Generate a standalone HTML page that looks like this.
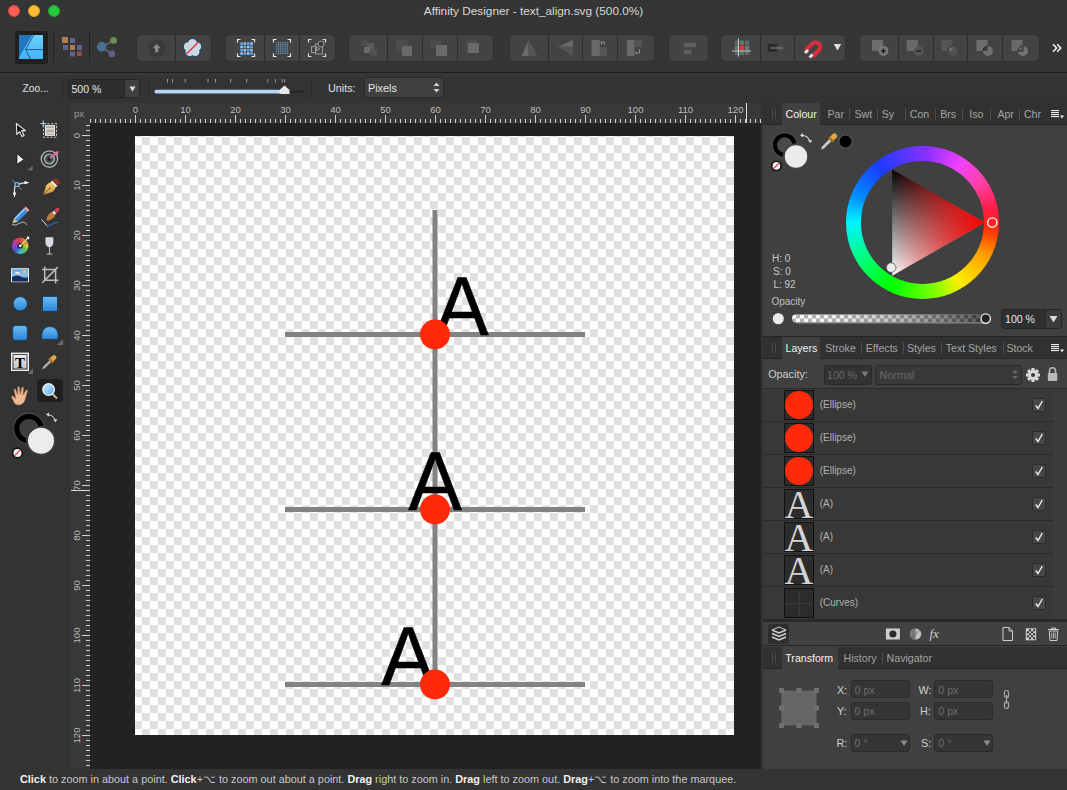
<!DOCTYPE html><html><head><meta charset="utf-8"><style>
*{margin:0;padding:0;box-sizing:border-box}
html,body{width:1067px;height:790px;overflow:hidden;background:#353535;font-family:"Liberation Sans", sans-serif;}
.abs{position:absolute}
.grp{position:absolute;top:35px;height:26px;background:#434343;border-radius:4px;box-shadow:0 0 0 0.5px #2a2a2a}
.div{position:absolute;top:0;width:1px;height:26px;background:#2c2c2c}
.tab{position:absolute;font-size:10.6px;color:#a8a8a8;white-space:nowrap}
.sep{position:absolute;width:1px;height:13px;background:#4a4a4a}
</style></head><body>
<div class="abs" style="left:8px;top:5px;width:12px;height:12px;border-radius:6px;background:#fe5f57;border:0.5px solid #e0443e"></div>
<div class="abs" style="left:28px;top:5px;width:12px;height:12px;border-radius:6px;background:#febc2e;border:0.5px solid #dea123"></div>
<div class="abs" style="left:48px;top:5px;width:12px;height:12px;border-radius:6px;background:#28c840;border:0.5px solid #1aab29"></div>
<div class="abs" style="left:0;top:3.5px;width:1067px;text-align:center;font-size:11.8px;color:#d8d8d8;">Affinity Designer - text_align.svg (500.0%)</div>
<div class="abs" style="left:0;top:73px;width:1067px;height:30px;background:linear-gradient(#383838,#333333 4px,#333333)"></div>
<div class="abs" style="left:0;top:72px;width:1067px;height:1px;background:#1c1c1c"></div>
<div class="abs" style="left:0px;top:103px;width:71px;height:666px;background:#333333"></div>
<div class="abs" style="left:0px;top:769px;width:1067px;height:21px;background:#333333"></div>
<div class="abs" style="left:71px;top:103px;width:690px;height:20px;background:#383838"></div>
<div class="abs" style="left:71px;top:123px;width:19px;height:646px;background:#383838"></div>
<div class="abs" style="left:90px;top:123px;width:671px;height:646px;background:#222222"></div>
<svg style="position:absolute;left:71px;top:103px" width="690" height="20"><rect x="19.0" y="16" width="1" height="4" fill="#cfcfcf"/><rect x="24.0" y="16" width="1" height="4" fill="#cfcfcf"/><rect x="29.0" y="16" width="1" height="4" fill="#cfcfcf"/><rect x="34.0" y="16" width="1" height="4" fill="#cfcfcf"/><rect x="39.0" y="16" width="1" height="4" fill="#cfcfcf"/><rect x="44.0" y="16" width="1" height="4" fill="#cfcfcf"/><rect x="49.0" y="16" width="1" height="4" fill="#cfcfcf"/><rect x="54.0" y="16" width="1" height="4" fill="#cfcfcf"/><rect x="59.0" y="16" width="1" height="4" fill="#cfcfcf"/><rect x="64.0" y="12" width="1" height="8" fill="#cfcfcf"/><text x="64.5" y="10" text-anchor="middle" font-size="9.5" fill="#bdbdbd" font-family="Liberation Sans">0</text><rect x="69.0" y="16" width="1" height="4" fill="#cfcfcf"/><rect x="74.0" y="16" width="1" height="4" fill="#cfcfcf"/><rect x="79.0" y="16" width="1" height="4" fill="#cfcfcf"/><rect x="84.0" y="16" width="1" height="4" fill="#cfcfcf"/><rect x="89.0" y="16" width="1" height="4" fill="#cfcfcf"/><rect x="94.0" y="16" width="1" height="4" fill="#cfcfcf"/><rect x="99.0" y="16" width="1" height="4" fill="#cfcfcf"/><rect x="104.0" y="16" width="1" height="4" fill="#cfcfcf"/><rect x="109.0" y="16" width="1" height="4" fill="#cfcfcf"/><rect x="114.0" y="12" width="1" height="8" fill="#cfcfcf"/><text x="114.5" y="10" text-anchor="middle" font-size="9.5" fill="#bdbdbd" font-family="Liberation Sans">10</text><rect x="119.0" y="16" width="1" height="4" fill="#cfcfcf"/><rect x="124.0" y="16" width="1" height="4" fill="#cfcfcf"/><rect x="129.0" y="16" width="1" height="4" fill="#cfcfcf"/><rect x="134.0" y="16" width="1" height="4" fill="#cfcfcf"/><rect x="139.0" y="16" width="1" height="4" fill="#cfcfcf"/><rect x="144.0" y="16" width="1" height="4" fill="#cfcfcf"/><rect x="149.0" y="16" width="1" height="4" fill="#cfcfcf"/><rect x="154.0" y="16" width="1" height="4" fill="#cfcfcf"/><rect x="159.0" y="16" width="1" height="4" fill="#cfcfcf"/><rect x="164.0" y="12" width="1" height="8" fill="#cfcfcf"/><text x="164.5" y="10" text-anchor="middle" font-size="9.5" fill="#bdbdbd" font-family="Liberation Sans">20</text><rect x="169.0" y="16" width="1" height="4" fill="#cfcfcf"/><rect x="174.0" y="16" width="1" height="4" fill="#cfcfcf"/><rect x="179.0" y="16" width="1" height="4" fill="#cfcfcf"/><rect x="184.0" y="16" width="1" height="4" fill="#cfcfcf"/><rect x="189.0" y="16" width="1" height="4" fill="#cfcfcf"/><rect x="194.0" y="16" width="1" height="4" fill="#cfcfcf"/><rect x="199.0" y="16" width="1" height="4" fill="#cfcfcf"/><rect x="204.0" y="16" width="1" height="4" fill="#cfcfcf"/><rect x="209.0" y="16" width="1" height="4" fill="#cfcfcf"/><rect x="214.0" y="12" width="1" height="8" fill="#cfcfcf"/><text x="214.5" y="10" text-anchor="middle" font-size="9.5" fill="#bdbdbd" font-family="Liberation Sans">30</text><rect x="219.0" y="16" width="1" height="4" fill="#cfcfcf"/><rect x="224.0" y="16" width="1" height="4" fill="#cfcfcf"/><rect x="229.0" y="16" width="1" height="4" fill="#cfcfcf"/><rect x="234.0" y="16" width="1" height="4" fill="#cfcfcf"/><rect x="239.0" y="16" width="1" height="4" fill="#cfcfcf"/><rect x="244.0" y="16" width="1" height="4" fill="#cfcfcf"/><rect x="249.0" y="16" width="1" height="4" fill="#cfcfcf"/><rect x="254.0" y="16" width="1" height="4" fill="#cfcfcf"/><rect x="259.0" y="16" width="1" height="4" fill="#cfcfcf"/><rect x="264.0" y="12" width="1" height="8" fill="#cfcfcf"/><text x="264.5" y="10" text-anchor="middle" font-size="9.5" fill="#bdbdbd" font-family="Liberation Sans">40</text><rect x="269.0" y="16" width="1" height="4" fill="#cfcfcf"/><rect x="274.0" y="16" width="1" height="4" fill="#cfcfcf"/><rect x="279.0" y="16" width="1" height="4" fill="#cfcfcf"/><rect x="284.0" y="16" width="1" height="4" fill="#cfcfcf"/><rect x="289.0" y="16" width="1" height="4" fill="#cfcfcf"/><rect x="294.0" y="16" width="1" height="4" fill="#cfcfcf"/><rect x="299.0" y="16" width="1" height="4" fill="#cfcfcf"/><rect x="304.0" y="16" width="1" height="4" fill="#cfcfcf"/><rect x="309.0" y="16" width="1" height="4" fill="#cfcfcf"/><rect x="314.0" y="12" width="1" height="8" fill="#cfcfcf"/><text x="314.5" y="10" text-anchor="middle" font-size="9.5" fill="#bdbdbd" font-family="Liberation Sans">50</text><rect x="319.0" y="16" width="1" height="4" fill="#cfcfcf"/><rect x="324.0" y="16" width="1" height="4" fill="#cfcfcf"/><rect x="329.0" y="16" width="1" height="4" fill="#cfcfcf"/><rect x="334.0" y="16" width="1" height="4" fill="#cfcfcf"/><rect x="339.0" y="16" width="1" height="4" fill="#cfcfcf"/><rect x="344.0" y="16" width="1" height="4" fill="#cfcfcf"/><rect x="349.0" y="16" width="1" height="4" fill="#cfcfcf"/><rect x="354.0" y="16" width="1" height="4" fill="#cfcfcf"/><rect x="359.0" y="16" width="1" height="4" fill="#cfcfcf"/><rect x="364.0" y="12" width="1" height="8" fill="#cfcfcf"/><text x="364.5" y="10" text-anchor="middle" font-size="9.5" fill="#bdbdbd" font-family="Liberation Sans">60</text><rect x="369.0" y="16" width="1" height="4" fill="#cfcfcf"/><rect x="374.0" y="16" width="1" height="4" fill="#cfcfcf"/><rect x="379.0" y="16" width="1" height="4" fill="#cfcfcf"/><rect x="384.0" y="16" width="1" height="4" fill="#cfcfcf"/><rect x="389.0" y="16" width="1" height="4" fill="#cfcfcf"/><rect x="394.0" y="16" width="1" height="4" fill="#cfcfcf"/><rect x="399.0" y="16" width="1" height="4" fill="#cfcfcf"/><rect x="404.0" y="16" width="1" height="4" fill="#cfcfcf"/><rect x="409.0" y="16" width="1" height="4" fill="#cfcfcf"/><rect x="414.0" y="12" width="1" height="8" fill="#cfcfcf"/><text x="414.5" y="10" text-anchor="middle" font-size="9.5" fill="#bdbdbd" font-family="Liberation Sans">70</text><rect x="419.0" y="16" width="1" height="4" fill="#cfcfcf"/><rect x="424.0" y="16" width="1" height="4" fill="#cfcfcf"/><rect x="429.0" y="16" width="1" height="4" fill="#cfcfcf"/><rect x="434.0" y="16" width="1" height="4" fill="#cfcfcf"/><rect x="439.0" y="16" width="1" height="4" fill="#cfcfcf"/><rect x="444.0" y="16" width="1" height="4" fill="#cfcfcf"/><rect x="449.0" y="16" width="1" height="4" fill="#cfcfcf"/><rect x="454.0" y="16" width="1" height="4" fill="#cfcfcf"/><rect x="459.0" y="16" width="1" height="4" fill="#cfcfcf"/><rect x="464.0" y="12" width="1" height="8" fill="#cfcfcf"/><text x="464.5" y="10" text-anchor="middle" font-size="9.5" fill="#bdbdbd" font-family="Liberation Sans">80</text><rect x="469.0" y="16" width="1" height="4" fill="#cfcfcf"/><rect x="474.0" y="16" width="1" height="4" fill="#cfcfcf"/><rect x="479.0" y="16" width="1" height="4" fill="#cfcfcf"/><rect x="484.0" y="16" width="1" height="4" fill="#cfcfcf"/><rect x="489.0" y="16" width="1" height="4" fill="#cfcfcf"/><rect x="494.0" y="16" width="1" height="4" fill="#cfcfcf"/><rect x="499.0" y="16" width="1" height="4" fill="#cfcfcf"/><rect x="504.0" y="16" width="1" height="4" fill="#cfcfcf"/><rect x="509.0" y="16" width="1" height="4" fill="#cfcfcf"/><rect x="514.0" y="12" width="1" height="8" fill="#cfcfcf"/><text x="514.5" y="10" text-anchor="middle" font-size="9.5" fill="#bdbdbd" font-family="Liberation Sans">90</text><rect x="519.0" y="16" width="1" height="4" fill="#cfcfcf"/><rect x="524.0" y="16" width="1" height="4" fill="#cfcfcf"/><rect x="529.0" y="16" width="1" height="4" fill="#cfcfcf"/><rect x="534.0" y="16" width="1" height="4" fill="#cfcfcf"/><rect x="539.0" y="16" width="1" height="4" fill="#cfcfcf"/><rect x="544.0" y="16" width="1" height="4" fill="#cfcfcf"/><rect x="549.0" y="16" width="1" height="4" fill="#cfcfcf"/><rect x="554.0" y="16" width="1" height="4" fill="#cfcfcf"/><rect x="559.0" y="16" width="1" height="4" fill="#cfcfcf"/><rect x="564.0" y="12" width="1" height="8" fill="#cfcfcf"/><text x="564.5" y="10" text-anchor="middle" font-size="9.5" fill="#bdbdbd" font-family="Liberation Sans">100</text><rect x="569.0" y="16" width="1" height="4" fill="#cfcfcf"/><rect x="574.0" y="16" width="1" height="4" fill="#cfcfcf"/><rect x="579.0" y="16" width="1" height="4" fill="#cfcfcf"/><rect x="584.0" y="16" width="1" height="4" fill="#cfcfcf"/><rect x="589.0" y="16" width="1" height="4" fill="#cfcfcf"/><rect x="594.0" y="16" width="1" height="4" fill="#cfcfcf"/><rect x="599.0" y="16" width="1" height="4" fill="#cfcfcf"/><rect x="604.0" y="16" width="1" height="4" fill="#cfcfcf"/><rect x="609.0" y="16" width="1" height="4" fill="#cfcfcf"/><rect x="614.0" y="12" width="1" height="8" fill="#cfcfcf"/><text x="614.5" y="10" text-anchor="middle" font-size="9.5" fill="#bdbdbd" font-family="Liberation Sans">110</text><rect x="619.0" y="16" width="1" height="4" fill="#cfcfcf"/><rect x="624.0" y="16" width="1" height="4" fill="#cfcfcf"/><rect x="629.0" y="16" width="1" height="4" fill="#cfcfcf"/><rect x="634.0" y="16" width="1" height="4" fill="#cfcfcf"/><rect x="639.0" y="16" width="1" height="4" fill="#cfcfcf"/><rect x="644.0" y="16" width="1" height="4" fill="#cfcfcf"/><rect x="649.0" y="16" width="1" height="4" fill="#cfcfcf"/><rect x="654.0" y="16" width="1" height="4" fill="#cfcfcf"/><rect x="659.0" y="16" width="1" height="4" fill="#cfcfcf"/><rect x="664.0" y="12" width="1" height="8" fill="#cfcfcf"/><text x="664.5" y="10" text-anchor="middle" font-size="9.5" fill="#bdbdbd" font-family="Liberation Sans">120</text><rect x="669.0" y="16" width="1" height="4" fill="#cfcfcf"/><rect x="674.0" y="16" width="1" height="4" fill="#cfcfcf"/><rect x="679.0" y="16" width="1" height="4" fill="#cfcfcf"/><rect x="684.0" y="16" width="1" height="4" fill="#cfcfcf"/><rect x="689.0" y="16" width="1" height="4" fill="#cfcfcf"/><rect x="675" y="0" width="1" height="20" fill="#dcdcdc"/></svg>
<svg style="position:absolute;left:71px;top:123px" width="19" height="646"><rect x="15" y="2.0" width="4" height="1" fill="#cfcfcf"/><rect x="15" y="7.0" width="4" height="1" fill="#cfcfcf"/><rect x="11" y="12.0" width="8" height="1" fill="#cfcfcf"/><text transform="translate(9.4,12.5) rotate(-90)" text-anchor="middle" font-size="9.5" fill="#bdbdbd" font-family="Liberation Sans">0</text><rect x="15" y="17.0" width="4" height="1" fill="#cfcfcf"/><rect x="15" y="22.0" width="4" height="1" fill="#cfcfcf"/><rect x="15" y="27.0" width="4" height="1" fill="#cfcfcf"/><rect x="15" y="32.0" width="4" height="1" fill="#cfcfcf"/><rect x="15" y="37.0" width="4" height="1" fill="#cfcfcf"/><rect x="15" y="42.0" width="4" height="1" fill="#cfcfcf"/><rect x="15" y="47.0" width="4" height="1" fill="#cfcfcf"/><rect x="15" y="52.0" width="4" height="1" fill="#cfcfcf"/><rect x="15" y="57.0" width="4" height="1" fill="#cfcfcf"/><rect x="11" y="62.0" width="8" height="1" fill="#cfcfcf"/><text transform="translate(9.4,62.5) rotate(-90)" text-anchor="middle" font-size="9.5" fill="#bdbdbd" font-family="Liberation Sans">10</text><rect x="15" y="67.0" width="4" height="1" fill="#cfcfcf"/><rect x="15" y="72.0" width="4" height="1" fill="#cfcfcf"/><rect x="15" y="77.0" width="4" height="1" fill="#cfcfcf"/><rect x="15" y="82.0" width="4" height="1" fill="#cfcfcf"/><rect x="15" y="87.0" width="4" height="1" fill="#cfcfcf"/><rect x="15" y="92.0" width="4" height="1" fill="#cfcfcf"/><rect x="15" y="97.0" width="4" height="1" fill="#cfcfcf"/><rect x="15" y="102.0" width="4" height="1" fill="#cfcfcf"/><rect x="15" y="107.0" width="4" height="1" fill="#cfcfcf"/><rect x="11" y="112.0" width="8" height="1" fill="#cfcfcf"/><text transform="translate(9.4,112.5) rotate(-90)" text-anchor="middle" font-size="9.5" fill="#bdbdbd" font-family="Liberation Sans">20</text><rect x="15" y="117.0" width="4" height="1" fill="#cfcfcf"/><rect x="15" y="122.0" width="4" height="1" fill="#cfcfcf"/><rect x="15" y="127.0" width="4" height="1" fill="#cfcfcf"/><rect x="15" y="132.0" width="4" height="1" fill="#cfcfcf"/><rect x="15" y="137.0" width="4" height="1" fill="#cfcfcf"/><rect x="15" y="142.0" width="4" height="1" fill="#cfcfcf"/><rect x="15" y="147.0" width="4" height="1" fill="#cfcfcf"/><rect x="15" y="152.0" width="4" height="1" fill="#cfcfcf"/><rect x="15" y="157.0" width="4" height="1" fill="#cfcfcf"/><rect x="11" y="162.0" width="8" height="1" fill="#cfcfcf"/><text transform="translate(9.4,162.5) rotate(-90)" text-anchor="middle" font-size="9.5" fill="#bdbdbd" font-family="Liberation Sans">30</text><rect x="15" y="167.0" width="4" height="1" fill="#cfcfcf"/><rect x="15" y="172.0" width="4" height="1" fill="#cfcfcf"/><rect x="15" y="177.0" width="4" height="1" fill="#cfcfcf"/><rect x="15" y="182.0" width="4" height="1" fill="#cfcfcf"/><rect x="15" y="187.0" width="4" height="1" fill="#cfcfcf"/><rect x="15" y="192.0" width="4" height="1" fill="#cfcfcf"/><rect x="15" y="197.0" width="4" height="1" fill="#cfcfcf"/><rect x="15" y="202.0" width="4" height="1" fill="#cfcfcf"/><rect x="15" y="207.0" width="4" height="1" fill="#cfcfcf"/><rect x="11" y="212.0" width="8" height="1" fill="#cfcfcf"/><text transform="translate(9.4,212.5) rotate(-90)" text-anchor="middle" font-size="9.5" fill="#bdbdbd" font-family="Liberation Sans">40</text><rect x="15" y="217.0" width="4" height="1" fill="#cfcfcf"/><rect x="15" y="222.0" width="4" height="1" fill="#cfcfcf"/><rect x="15" y="227.0" width="4" height="1" fill="#cfcfcf"/><rect x="15" y="232.0" width="4" height="1" fill="#cfcfcf"/><rect x="15" y="237.0" width="4" height="1" fill="#cfcfcf"/><rect x="15" y="242.0" width="4" height="1" fill="#cfcfcf"/><rect x="15" y="247.0" width="4" height="1" fill="#cfcfcf"/><rect x="15" y="252.0" width="4" height="1" fill="#cfcfcf"/><rect x="15" y="257.0" width="4" height="1" fill="#cfcfcf"/><rect x="11" y="262.0" width="8" height="1" fill="#cfcfcf"/><text transform="translate(9.4,262.5) rotate(-90)" text-anchor="middle" font-size="9.5" fill="#bdbdbd" font-family="Liberation Sans">50</text><rect x="15" y="267.0" width="4" height="1" fill="#cfcfcf"/><rect x="15" y="272.0" width="4" height="1" fill="#cfcfcf"/><rect x="15" y="277.0" width="4" height="1" fill="#cfcfcf"/><rect x="15" y="282.0" width="4" height="1" fill="#cfcfcf"/><rect x="15" y="287.0" width="4" height="1" fill="#cfcfcf"/><rect x="15" y="292.0" width="4" height="1" fill="#cfcfcf"/><rect x="15" y="297.0" width="4" height="1" fill="#cfcfcf"/><rect x="15" y="302.0" width="4" height="1" fill="#cfcfcf"/><rect x="15" y="307.0" width="4" height="1" fill="#cfcfcf"/><rect x="11" y="312.0" width="8" height="1" fill="#cfcfcf"/><text transform="translate(9.4,312.5) rotate(-90)" text-anchor="middle" font-size="9.5" fill="#bdbdbd" font-family="Liberation Sans">60</text><rect x="15" y="317.0" width="4" height="1" fill="#cfcfcf"/><rect x="15" y="322.0" width="4" height="1" fill="#cfcfcf"/><rect x="15" y="327.0" width="4" height="1" fill="#cfcfcf"/><rect x="15" y="332.0" width="4" height="1" fill="#cfcfcf"/><rect x="15" y="337.0" width="4" height="1" fill="#cfcfcf"/><rect x="15" y="342.0" width="4" height="1" fill="#cfcfcf"/><rect x="15" y="347.0" width="4" height="1" fill="#cfcfcf"/><rect x="15" y="352.0" width="4" height="1" fill="#cfcfcf"/><rect x="15" y="357.0" width="4" height="1" fill="#cfcfcf"/><rect x="11" y="362.0" width="8" height="1" fill="#cfcfcf"/><text transform="translate(9.4,362.5) rotate(-90)" text-anchor="middle" font-size="9.5" fill="#bdbdbd" font-family="Liberation Sans">70</text><rect x="15" y="367.0" width="4" height="1" fill="#cfcfcf"/><rect x="15" y="372.0" width="4" height="1" fill="#cfcfcf"/><rect x="15" y="377.0" width="4" height="1" fill="#cfcfcf"/><rect x="15" y="382.0" width="4" height="1" fill="#cfcfcf"/><rect x="15" y="387.0" width="4" height="1" fill="#cfcfcf"/><rect x="15" y="392.0" width="4" height="1" fill="#cfcfcf"/><rect x="15" y="397.0" width="4" height="1" fill="#cfcfcf"/><rect x="15" y="402.0" width="4" height="1" fill="#cfcfcf"/><rect x="15" y="407.0" width="4" height="1" fill="#cfcfcf"/><rect x="11" y="412.0" width="8" height="1" fill="#cfcfcf"/><text transform="translate(9.4,412.5) rotate(-90)" text-anchor="middle" font-size="9.5" fill="#bdbdbd" font-family="Liberation Sans">80</text><rect x="15" y="417.0" width="4" height="1" fill="#cfcfcf"/><rect x="15" y="422.0" width="4" height="1" fill="#cfcfcf"/><rect x="15" y="427.0" width="4" height="1" fill="#cfcfcf"/><rect x="15" y="432.0" width="4" height="1" fill="#cfcfcf"/><rect x="15" y="437.0" width="4" height="1" fill="#cfcfcf"/><rect x="15" y="442.0" width="4" height="1" fill="#cfcfcf"/><rect x="15" y="447.0" width="4" height="1" fill="#cfcfcf"/><rect x="15" y="452.0" width="4" height="1" fill="#cfcfcf"/><rect x="15" y="457.0" width="4" height="1" fill="#cfcfcf"/><rect x="11" y="462.0" width="8" height="1" fill="#cfcfcf"/><text transform="translate(9.4,462.5) rotate(-90)" text-anchor="middle" font-size="9.5" fill="#bdbdbd" font-family="Liberation Sans">90</text><rect x="15" y="467.0" width="4" height="1" fill="#cfcfcf"/><rect x="15" y="472.0" width="4" height="1" fill="#cfcfcf"/><rect x="15" y="477.0" width="4" height="1" fill="#cfcfcf"/><rect x="15" y="482.0" width="4" height="1" fill="#cfcfcf"/><rect x="15" y="487.0" width="4" height="1" fill="#cfcfcf"/><rect x="15" y="492.0" width="4" height="1" fill="#cfcfcf"/><rect x="15" y="497.0" width="4" height="1" fill="#cfcfcf"/><rect x="15" y="502.0" width="4" height="1" fill="#cfcfcf"/><rect x="15" y="507.0" width="4" height="1" fill="#cfcfcf"/><rect x="11" y="512.0" width="8" height="1" fill="#cfcfcf"/><text transform="translate(9.4,512.5) rotate(-90)" text-anchor="middle" font-size="9.5" fill="#bdbdbd" font-family="Liberation Sans">100</text><rect x="15" y="517.0" width="4" height="1" fill="#cfcfcf"/><rect x="15" y="522.0" width="4" height="1" fill="#cfcfcf"/><rect x="15" y="527.0" width="4" height="1" fill="#cfcfcf"/><rect x="15" y="532.0" width="4" height="1" fill="#cfcfcf"/><rect x="15" y="537.0" width="4" height="1" fill="#cfcfcf"/><rect x="15" y="542.0" width="4" height="1" fill="#cfcfcf"/><rect x="15" y="547.0" width="4" height="1" fill="#cfcfcf"/><rect x="15" y="552.0" width="4" height="1" fill="#cfcfcf"/><rect x="15" y="557.0" width="4" height="1" fill="#cfcfcf"/><rect x="11" y="562.0" width="8" height="1" fill="#cfcfcf"/><text transform="translate(9.4,562.5) rotate(-90)" text-anchor="middle" font-size="9.5" fill="#bdbdbd" font-family="Liberation Sans">110</text><rect x="15" y="567.0" width="4" height="1" fill="#cfcfcf"/><rect x="15" y="572.0" width="4" height="1" fill="#cfcfcf"/><rect x="15" y="577.0" width="4" height="1" fill="#cfcfcf"/><rect x="15" y="582.0" width="4" height="1" fill="#cfcfcf"/><rect x="15" y="587.0" width="4" height="1" fill="#cfcfcf"/><rect x="15" y="592.0" width="4" height="1" fill="#cfcfcf"/><rect x="15" y="597.0" width="4" height="1" fill="#cfcfcf"/><rect x="15" y="602.0" width="4" height="1" fill="#cfcfcf"/><rect x="15" y="607.0" width="4" height="1" fill="#cfcfcf"/><rect x="11" y="612.0" width="8" height="1" fill="#cfcfcf"/><text transform="translate(9.4,612.5) rotate(-90)" text-anchor="middle" font-size="9.5" fill="#bdbdbd" font-family="Liberation Sans">120</text><rect x="15" y="617.0" width="4" height="1" fill="#cfcfcf"/><rect x="15" y="622.0" width="4" height="1" fill="#cfcfcf"/><rect x="15" y="627.0" width="4" height="1" fill="#cfcfcf"/><rect x="15" y="632.0" width="4" height="1" fill="#cfcfcf"/><rect x="15" y="637.0" width="4" height="1" fill="#cfcfcf"/><rect x="15" y="642.0" width="4" height="1" fill="#cfcfcf"/><rect x="0" y="367" width="19" height="1" fill="#dcdcdc"/></svg>
<div class="abs" style="left:74px;top:108px;font-size:9.5px;color:#9a9a9a">px</div>
<div class="abs" style="left:135px;top:136px;width:599px;height:599px;background-color:#ffffff;background-image:linear-gradient(45deg,#e0e0e0 25%,transparent 25%,transparent 75%,#e0e0e0 75%),linear-gradient(45deg,#e0e0e0 25%,transparent 25%,transparent 75%,#e0e0e0 75%);background-size:16px 16px;background-position:-1px 1px,7px 9px"></div>
<svg class="abs" style="left:135px;top:136px" width="599" height="599">
<rect x="297.5" y="74" width="5" height="475" fill="#828282"/>
<rect x="150" y="196" width="300" height="5" fill="#828282"/>
<rect x="150" y="371" width="300" height="5" fill="#828282"/>
<rect x="150" y="546" width="300" height="5" fill="#828282"/>
<text transform="translate(300,199) scale(0.97,1.01) translate(-300,-199)" x="300" y="199" font-family="Liberation Sans" font-size="83" fill="#000" stroke="#000" stroke-width="0.5">A</text>
<text transform="translate(300,374) scale(0.97,1.01) translate(-300,-374)" x="300" y="374" font-family="Liberation Sans" font-size="83" fill="#000" stroke="#000" stroke-width="0.5" text-anchor="middle">A</text>
<text transform="translate(300,549) scale(0.97,1.01) translate(-300,-549)" x="300" y="549" font-family="Liberation Sans" font-size="83" fill="#000" stroke="#000" stroke-width="0.5" text-anchor="end">A</text>
<circle cx="300" cy="198.5" r="15" fill="#ff2a0a"/>
<circle cx="300" cy="373.5" r="15" fill="#ff2a0a"/>
<circle cx="300" cy="548.5" r="15" fill="#ff2a0a"/>
</svg>
<div class="abs" style="left:20px;top:773px;font-size:10.85px;color:#c8c8c8;white-space:nowrap"><b style="color:#f0f0f0">Click</b> to zoom in about a point. <b style="color:#f0f0f0">Click</b>+⌥ to zoom out about a point. <b style="color:#f0f0f0">Drag</b> right to zoom in. <b style="color:#f0f0f0">Drag</b> left to zoom out. <b style="color:#f0f0f0">Drag</b>+⌥ to zoom into the marquee.</div>
<svg class="abs" style="left:0;top:103px" width="71" height="370"><defs><linearGradient id="bl" x1="0" y1="0" x2="0" y2="1"><stop offset="0" stop-color="#6cbcf4"/><stop offset="1" stop-color="#2b86d6"/></linearGradient><linearGradient id="tg" x1="0" y1="0" x2="0" y2="1"><stop offset="0" stop-color="#f2f2f2"/><stop offset="1" stop-color="#bdbdbd"/></linearGradient><linearGradient id="sky" x1="0" y1="0" x2="0" y2="1"><stop offset="0" stop-color="#5aa8e8"/><stop offset="0.55" stop-color="#8cc4ec"/><stop offset="1" stop-color="#1a3870"/></linearGradient><linearGradient id="pen" x1="0" y1="0" x2="1" y2="1"><stop offset="0" stop-color="#f8d070"/><stop offset="1" stop-color="#c88a28"/></linearGradient><linearGradient id="mag" x1="0" y1="0" x2="1" y2="1"><stop offset="0" stop-color="#d0ecff"/><stop offset="1" stop-color="#5aa8e8"/></linearGradient></defs><path d="M16.3 20.5 L16.9 31.4 L19.7 28.7 L22.1 33.5 L24.1 32.4 L21.7 27.6 L25.5 27.6Z" fill="#111" stroke="#e8e8e8" stroke-width="1.1" stroke-linejoin="round"/><rect x="43.5" y="20.799999999999997" width="13" height="13.5" fill="none" stroke="#b8c8d8" stroke-width="1.1" stroke-dasharray="2.2 1.6"/><rect x="45.5" y="22.599999999999994" width="9" height="9.8" fill="#b8ae9c" stroke="#ececec" stroke-width="1"/><rect x="46" y="25.30000000000001" width="8" height="1" fill="#ececec"/><rect x="46" y="29.5" width="8" height="1" fill="#ececec"/><path d="M43.3 17.5 V23.5 M40.3 20.5 H46.3" stroke="#a8c8e8" stroke-width="1.2"/><path d="M16.9 50.5 L16.9 61.5 L24.1 56.5 Z" fill="#f4f4f4" stroke="#111" stroke-width="0.9" stroke-linejoin="round"/><path d="M32.7 62.19999999999999 V67.6 H27.5 Z" fill="#6a6a6a"/><circle cx="49.4" cy="56" r="8.2" fill="none" stroke="#b8b8b8" stroke-width="1.2"/><circle cx="49.4" cy="56" r="5" fill="#4a5a60" stroke="#b8b8b8" stroke-width="1.2"/><circle cx="49.4" cy="56" r="2.2" fill="#222"/><line x1="50" y1="55.400000000000006" x2="57" y2="49.5" stroke="#e070a0" stroke-width="1.8"/><path d="M54.5 49 L58.8 48 L57.8 52.19999999999999 Z" fill="#e070a0"/><path d="M14.5 94 V87 Q14.5 81.80000000000001 17.2 81.6 Q22 79.6 28.8 79.6" fill="none" stroke="#e0e0e0" stroke-width="1.2"/><line x1="12" y1="77" x2="22" y2="87" stroke="#8aa0b0" stroke-width="0.8"/><rect x="15.2" y="79.80000000000001" width="3.6" height="3.6" fill="#2a3a4a" stroke="#9cc8f0" stroke-width="1"/><circle cx="25.5" cy="79.6" r="1.5" fill="#f0f0f0"/><circle cx="14.5" cy="90.5" r="1.5" fill="#f0f0f0"/><g transform="translate(50.5,84.5) rotate(45) scale(0.88)"><path d="M0 11.5 L-5.2 1.5 Q-5.2 -3 -3.8 -4.5 H3.8 Q5.2 -3 5.2 1.5 Z" fill="url(#pen)"/><line x1="0" y1="11" x2="0" y2="1" stroke="#5a3a10" stroke-width="0.8"/><circle cx="0" cy="1.2" r="0.9" fill="#5a3a10"/><rect x="-4.2" y="-7" width="8.4" height="2.6" fill="#f0f0f0"/><path d="M-4 -7 V-10 Q-4 -12.5 0 -12.5 Q4 -12.5 4 -10 V-7Z" fill="#8a3422"/></g><g transform="translate(19.5,113.5) rotate(45)"><rect x="-2.6" y="-9" width="5.2" height="14" fill="#3a8ae0"/><rect x="-2.6" y="-9" width="1.8" height="14" fill="#8cc8f8"/><rect x="-2.6" y="-11.5" width="5.2" height="2.5" fill="#e8a0a0"/><path d="M-2.6 5 L0 10 L2.6 5Z" fill="#e0c090"/></g><path d="M12 121.5 Q16 123 19 120.5 Q22 118 25 119.5 L27 122" fill="none" stroke="#c8c8c8" stroke-width="0.9"/><g transform="translate(51,113) rotate(45)"><rect x="-1.8" y="-11" width="3.6" height="6" rx="1.5" fill="#d04050"/><rect x="-1.8" y="-5.5" width="3.6" height="2.2" fill="#e8e8e8"/><path d="M-2.8 -3.3 H2.8 Q3.5 3 0 6.5 Q-3.5 3 -2.8 -3.3Z" fill="#c07838"/></g><line x1="41.5" y1="116.4" x2="47.8" y2="123.5" stroke="#e0e0e0" stroke-width="1"/><path d="M47 123 Q52 122 54 120.5 Q56 119 59 119.5" fill="none" stroke="#3060a0" stroke-width="1.2"/><path d="M20.2 142.80 L20.20 134.60 A8.2 8.2 0 0 1 21.74 134.75Z" fill="#f04b3e"/><path d="M20.2 142.80 L21.62 134.72 A8.2 8.2 0 0 1 23.11 135.13Z" fill="#f0603a"/><path d="M20.2 142.80 L23.00 135.09 A8.2 8.2 0 0 1 24.40 135.76Z" fill="#f07636"/><path d="M20.2 142.80 L24.30 135.70 A8.2 8.2 0 0 1 25.56 136.59Z" fill="#f08b33"/><path d="M20.2 142.80 L25.47 136.52 A8.2 8.2 0 0 1 26.55 137.62Z" fill="#efa030"/><path d="M20.2 142.80 L26.48 137.53 A8.2 8.2 0 0 1 27.36 138.80Z" fill="#ecae33"/><path d="M20.2 142.80 L27.30 138.70 A8.2 8.2 0 0 1 27.94 140.10Z" fill="#e8bd37"/><path d="M20.2 142.80 L27.91 140.00 A8.2 8.2 0 0 1 28.29 141.49Z" fill="#e5cb3a"/><path d="M20.2 142.80 L28.28 141.38 A8.2 8.2 0 0 1 28.40 142.91Z" fill="#e1d93e"/><path d="M20.2 142.80 L28.40 142.80 A8.2 8.2 0 0 1 28.25 144.34Z" fill="#d0de43"/><path d="M20.2 142.80 L28.28 144.22 A8.2 8.2 0 0 1 27.87 145.71Z" fill="#b4da4a"/><path d="M20.2 142.80 L27.91 145.60 A8.2 8.2 0 0 1 27.24 147.00Z" fill="#97d652"/><path d="M20.2 142.80 L27.30 146.90 A8.2 8.2 0 0 1 26.41 148.16Z" fill="#7bd359"/><path d="M20.2 142.80 L26.48 148.07 A8.2 8.2 0 0 1 25.38 149.15Z" fill="#5fcf61"/><path d="M20.2 142.80 L25.47 149.08 A8.2 8.2 0 0 1 24.20 149.96Z" fill="#58cc7d"/><path d="M20.2 142.80 L24.30 149.90 A8.2 8.2 0 0 1 22.90 150.54Z" fill="#51c89a"/><path d="M20.2 142.80 L23.00 150.51 A8.2 8.2 0 0 1 21.51 150.89Z" fill="#4ac5b6"/><path d="M20.2 142.80 L21.62 150.88 A8.2 8.2 0 0 1 20.09 151.00Z" fill="#43c1d2"/><path d="M20.2 142.80 L20.20 151.00 A8.2 8.2 0 0 1 18.66 150.85Z" fill="#40b4e0"/><path d="M20.2 142.80 L18.78 150.88 A8.2 8.2 0 0 1 17.29 150.47Z" fill="#409fe0"/><path d="M20.2 142.80 L17.40 150.51 A8.2 8.2 0 0 1 16.00 149.84Z" fill="#4089e0"/><path d="M20.2 142.80 L16.10 149.90 A8.2 8.2 0 0 1 14.84 149.01Z" fill="#4074e0"/><path d="M20.2 142.80 L14.93 149.08 A8.2 8.2 0 0 1 13.85 147.98Z" fill="#405fe0"/><path d="M20.2 142.80 L13.92 148.07 A8.2 8.2 0 0 1 13.04 146.80Z" fill="#5658e0"/><path d="M20.2 142.80 L13.10 146.90 A8.2 8.2 0 0 1 12.46 145.50Z" fill="#6b51e0"/><path d="M20.2 142.80 L12.49 145.60 A8.2 8.2 0 0 1 12.11 144.11Z" fill="#804ae0"/><path d="M20.2 142.80 L12.12 144.22 A8.2 8.2 0 0 1 12.00 142.69Z" fill="#9643e0"/><path d="M20.2 142.80 L12.00 142.80 A8.2 8.2 0 0 1 12.15 141.26Z" fill="#a740d8"/><path d="M20.2 142.80 L12.12 141.38 A8.2 8.2 0 0 1 12.53 139.89Z" fill="#b540ca"/><path d="M20.2 142.80 L12.49 140.00 A8.2 8.2 0 0 1 13.16 138.60Z" fill="#c440bb"/><path d="M20.2 142.80 L13.10 138.70 A8.2 8.2 0 0 1 13.99 137.44Z" fill="#d240ad"/><path d="M20.2 142.80 L13.92 137.53 A8.2 8.2 0 0 1 15.02 136.45Z" fill="#e0409f"/><path d="M20.2 142.80 L14.93 136.52 A8.2 8.2 0 0 1 16.20 135.64Z" fill="#e34089"/><path d="M20.2 142.80 L16.10 135.70 A8.2 8.2 0 0 1 17.50 135.06Z" fill="#e74074"/><path d="M20.2 142.80 L17.40 135.09 A8.2 8.2 0 0 1 18.89 134.71Z" fill="#ea405f"/><path d="M20.2 142.80 L18.78 134.72 A8.2 8.2 0 0 1 20.31 134.60Z" fill="#ee4049"/><circle cx="20.2" cy="142.8" r="2.6" fill="#222"/><line x1="20.2" y1="142.8" x2="28" y2="135" stroke="#f0f0f0" stroke-width="1"/><circle cx="20.2" cy="142.8" r="1.4" fill="#f0f0f0"/><circle cx="28" cy="135" r="1.4" fill="#f0f0f0"/><path d="M45.6 134.3 H53.2 Q54 141 52 143 Q50.8 144.2 49.4 144.2 Q48 144.2 46.8 143 Q44.8 141 45.6 134.3Z" fill="#d8d8e0"/><rect x="49" y="144" width="0.9" height="6" fill="#d0d0d0"/><path d="M46 151.6 Q49.4 149 52.9 151.6Z" fill="#d0d0d0"/><rect x="11.5" y="165.7" width="17" height="13" fill="url(#sky)" stroke="#e8e8e8" stroke-width="1"/><path d="M12 174 Q17 171 22 174 Q25 175.5 28 174.5 V178.5 H12Z" fill="#162c5c"/><circle cx="24.3" cy="168.5" r="1.5" fill="#e8d050"/><ellipse cx="17.5" cy="170" rx="2.6" ry="1" fill="#f0f0f0"/><path d="M44.7 163.5 V177.2 H58.5 M42 166.60000000000002 H55.6 V180.5 M42.2 179.7 L57.8 164.10000000000002" fill="none" stroke="#bdbdbd" stroke-width="1.5"/><circle cx="20.2" cy="200.8" r="7.1" fill="url(#bl)" stroke="#12385a" stroke-width="0.8"/><rect x="42.5" y="193.39999999999998" width="14.9" height="14.9" fill="url(#bl)" stroke="#12385a" stroke-width="0.8"/><rect x="12.7" y="222.5" width="14.6" height="14.9" rx="3" fill="url(#bl)" stroke="#12385a" stroke-width="0.8"/><path d="M41.8 236.3 V231.5 A8.15 8 0 0 1 58.1 231.5 V236.3Z" fill="url(#bl)" stroke="#12385a" stroke-width="0.8"/><path d="M63.1 236 V242 H57 Z" fill="#6a6a6a"/><rect x="11.5" y="250.10000000000002" width="17" height="17.4" fill="url(#tg)" stroke="#f0f0f0" stroke-width="1"/><rect x="13" y="251.60000000000002" width="14" height="14.4" fill="none" stroke="#222" stroke-width="0.8"/><text x="20" y="264.5" text-anchor="middle" font-family="Liberation Serif" font-weight="bold" font-size="15" fill="#000">T</text><path d="M33 265.6 V270.9 H27.6 Z" fill="#6a6a6a"/><g transform="translate(49,259.5) rotate(45)"><path d="M-1.3 -2 H1.3 V7 L0 9.5 L-1.3 7Z" fill="#a8a8a8"/><rect x="-3" y="-3.5" width="6" height="1.8" fill="#b07818"/><path d="M-2.4 -3.5 V-6.5 Q-2.4 -9.5 0 -9.5 Q2.4 -9.5 2.4 -6.5 V-3.5Z" fill="#e0a840"/></g><g transform="translate(19.8,0) scale(1.2,1.02) translate(-19.3,0)"><path d="M15 294.5 L12.5 288.5 Q12 287 13.5 287.3 L16 290 L14.5 281 Q14.5 279.8 15.6 280.3 L17.5 286 L17.6 278.5 Q18 277.5 19 278.5 L19.6 286 L21 279 Q21.6 278 22.4 279.2 L22 286.5 L24.5 281.5 Q25.3 280.8 25.8 282 L23.6 291 Q22.6 295.5 19 296 Q16.2 296 15 294.5Z" fill="#f0b890" stroke="#b07050" stroke-width="0.4"/></g><rect x="37.2" y="276.2" width="25.5" height="23.1" rx="3" fill="#1f1f1f"/><line x1="52" y1="290.5" x2="57" y2="295.5" stroke="#d8b890" stroke-width="2"/><circle cx="48.6" cy="286.5" r="5.8" fill="url(#mag)" stroke="#f0f0f0" stroke-width="1.3"/><circle cx="28.9" cy="325.6" r="9.5" fill="#3e3e3e"/><circle cx="28.9" cy="325.6" r="12.2" fill="none" stroke="#000" stroke-width="6.4"/><circle cx="28.9" cy="325.6" r="15.4" fill="none" stroke="#444" stroke-width="1.4"/><circle cx="28.9" cy="325.6" r="9" fill="none" stroke="#444" stroke-width="1.2"/><circle cx="41" cy="337.7" r="14" fill="#ececec" stroke="#3c3c3c" stroke-width="2"/><path d="M48 311.5 Q52.5 311.5 55.5 317" fill="none" stroke="#d8d8d8" stroke-width="1"/><path d="M46 311.5 L49 309.5 L49 313.5Z M55.5 319.3 L53.3 316.5 L57.5 316.2Z" fill="#d8d8d8"/><circle cx="17.5" cy="349.9" r="4.8" fill="#f4f4f4" stroke="#111" stroke-width="1.6"/><line x1="14.5" y1="352.9" x2="20.5" y2="346.9" stroke="#e03040" stroke-width="1.3"/></svg>
<div class="abs" style="left:15px;top:31px;width:33px;height:33px;background:#1f1f1f;border-radius:3px"></div><svg class="abs" style="left:19px;top:35px" width="24" height="24" viewBox="0 0 24 24">
<defs><linearGradient id="lg1" x1="0" y1="0" x2="0" y2="1"><stop offset="0" stop-color="#6fd0fb"/><stop offset="1" stop-color="#3fb4f4"/></linearGradient></defs>
<rect width="24" height="24" fill="url(#lg1)"/>
<polygon points="0,0 13.5,0 0,22.5" fill="#2474c0"/>
<polyline points="14.8,0 6.6,14.6 11.2,24" fill="none" stroke="#1c5c9c" stroke-width="1"/>
<line x1="6.6" y1="14.6" x2="24" y2="14.6" stroke="#1c5c9c" stroke-width="1"/>
</svg><div class="abs" style="left:53px;top:32px;width:1px;height:31px;background:#232323"></div><div class="abs" style="left:89px;top:32px;width:1px;height:31px;background:#232323"></div><svg class="abs" style="left:58px;top:34px" width="28" height="26">
<rect x="4" y="3" width="6" height="6" fill="#b27d4e"/>
<rect x="12" y="4" width="5" height="5" fill="#62628e"/>
<rect x="5" y="11" width="5" height="5" fill="#62628e"/>
<rect x="12" y="11" width="5" height="5" fill="#b27d4e"/>
<rect x="19" y="11" width="5" height="5" fill="#62628e"/>
<rect x="12" y="17.5" width="5" height="5" fill="#62628e"/>
<rect x="19" y="17.5" width="4.5" height="4.5" fill="#a24e4e"/>
</svg><svg class="abs" style="left:92px;top:34px" width="30" height="26">
<line x1="9.7" y1="12.9" x2="21.5" y2="6.4" stroke="#7a7a7a" stroke-width="1.1"/>
<line x1="9.7" y1="12.9" x2="19.8" y2="19.9" stroke="#7a7a7a" stroke-width="1.2"/>
<circle cx="9.7" cy="12.9" r="4.8" fill="#4a7090"/>
<circle cx="21.5" cy="6.4" r="3.4" fill="#6f8c56"/>
<circle cx="19.8" cy="19.9" r="3.3" fill="#5f5f8c"/>
</svg><div class="grp" style="left:137px;width:74px"><div class="div" style="left:37.5px"></div></div><div class="grp" style="left:226px;width:109px"><div class="div" style="left:37.5px"></div><div class="div" style="left:72.8px"></div></div><div class="grp" style="left:349px;width:144px"><div class="div" style="left:37.5px"></div><div class="div" style="left:72.5px"></div><div class="div" style="left:108px"></div></div><div class="grp" style="left:510px;width:144px"><div class="div" style="left:37.5px"></div><div class="div" style="left:72.3px"></div><div class="div" style="left:107.3px"></div></div><div class="grp" style="left:669px;width:39px"></div><div class="grp" style="left:721px;width:124px"><div class="div" style="left:38.6px"></div><div class="div" style="left:73.4px"></div></div><div class="grp" style="left:860px;width:179px"><div class="div" style="left:37.7px"></div><div class="div" style="left:72.5px"></div><div class="div" style="left:107.3px"></div><div class="div" style="left:142.4px"></div></div><svg class="abs" style="left:145px;top:37px" width="24" height="22"><g fill="#404040"><circle cx="12.00" cy="6.90" r="5"/><circle cx="16.37" cy="10.08" r="5"/><circle cx="14.70" cy="15.22" r="5"/><circle cx="9.30" cy="15.22" r="5"/><circle cx="7.63" cy="10.08" r="5"/><circle cx="12" cy="11.5" r="5"/></g><g fill="#3a3a3a"><circle cx="12.00" cy="6.90" r="4"/><circle cx="16.37" cy="10.08" r="4"/><circle cx="14.70" cy="15.22" r="4"/><circle cx="9.30" cy="15.22" r="4"/><circle cx="7.63" cy="10.08" r="4"/><circle cx="12" cy="11.5" r="4.5"/></g><path d="M11.7 7 L7.8 11.2 H10.2 V15.2 H13.2 V11.2 H15.6 Z" fill="#8c8c8c"/></svg><svg class="abs" style="left:181px;top:37px" width="24" height="22"><g fill="#1f4f78"><circle cx="11.50" cy="6.40" r="5.2"/><circle cx="15.87" cy="9.58" r="5.2"/><circle cx="14.20" cy="14.72" r="5.2"/><circle cx="8.80" cy="14.72" r="5.2"/><circle cx="7.13" cy="9.58" r="5.2"/><circle cx="11.5" cy="11" r="5"/></g><g fill="#cdd8e3"><circle cx="11.50" cy="6.40" r="4.3"/><circle cx="15.87" cy="9.58" r="4.3"/><circle cx="14.20" cy="14.72" r="4.3"/><circle cx="8.80" cy="14.72" r="4.3"/><circle cx="7.13" cy="9.58" r="4.3"/><circle cx="11.5" cy="11" r="4.5"/></g><line x1="17.3" y1="5.2" x2="5.7" y2="16.8" stroke="#e0384a" stroke-width="1.5"/></svg><svg class="abs" style="left:236px;top:38px" width="21" height="20"><path d="M4.5 1.5 H1.5 V4.5" fill="none" stroke="#e8e8e8" stroke-width="1.2"/><path d="M15.5 1.5 H18.5 V4.5" fill="none" stroke="#e8e8e8" stroke-width="1.2"/><path d="M4.5 18.5 H1.5 V15.5" fill="none" stroke="#e8e8e8" stroke-width="1.2"/><path d="M15.5 18.5 H18.5 V15.5" fill="none" stroke="#e8e8e8" stroke-width="1.2"/><rect x="4.3" y="4.3" width="2.6" height="2.6" fill="#58a8f0"/><rect x="4.3" y="7.6" width="2.6" height="2.6" fill="#9cc4e4"/><rect x="4.3" y="10.9" width="2.6" height="2.6" fill="#58a8f0"/><rect x="4.3" y="14.2" width="2.6" height="2.6" fill="#9cc4e4"/><rect x="7.6" y="4.3" width="2.6" height="2.6" fill="#9cc4e4"/><rect x="7.6" y="7.6" width="2.6" height="2.6" fill="#58a8f0"/><rect x="7.6" y="10.9" width="2.6" height="2.6" fill="#9cc4e4"/><rect x="7.6" y="14.2" width="2.6" height="2.6" fill="#58a8f0"/><rect x="10.9" y="4.3" width="2.6" height="2.6" fill="#58a8f0"/><rect x="10.9" y="7.6" width="2.6" height="2.6" fill="#9cc4e4"/><rect x="10.9" y="10.9" width="2.6" height="2.6" fill="#58a8f0"/><rect x="10.9" y="14.2" width="2.6" height="2.6" fill="#9cc4e4"/><rect x="14.2" y="4.3" width="2.6" height="2.6" fill="#9cc4e4"/><rect x="14.2" y="7.6" width="2.6" height="2.6" fill="#58a8f0"/><rect x="14.2" y="10.9" width="2.6" height="2.6" fill="#9cc4e4"/><rect x="14.2" y="14.2" width="2.6" height="2.6" fill="#58a8f0"/></svg><svg class="abs" style="left:272px;top:38px" width="21" height="20"><path d="M4.5 1.5 H1.5 V4.5" fill="none" stroke="#e8e8e8" stroke-width="1.2"/><path d="M15.5 1.5 H18.5 V4.5" fill="none" stroke="#e8e8e8" stroke-width="1.2"/><path d="M4.5 18.5 H1.5 V15.5" fill="none" stroke="#e8e8e8" stroke-width="1.2"/><path d="M15.5 18.5 H18.5 V15.5" fill="none" stroke="#e8e8e8" stroke-width="1.2"/><rect x="4.2" y="4.2" width="1" height="1" fill="#6fa8dc"/><rect x="4.2" y="6.0" width="1" height="1" fill="#6fa8dc"/><rect x="4.2" y="7.8" width="1" height="1" fill="#6fa8dc"/><rect x="4.2" y="9.6" width="1" height="1" fill="#6fa8dc"/><rect x="4.2" y="11.4" width="1" height="1" fill="#6fa8dc"/><rect x="4.2" y="13.2" width="1" height="1" fill="#6fa8dc"/><rect x="4.2" y="15.0" width="1" height="1" fill="#6fa8dc"/><rect x="6.0" y="4.2" width="1" height="1" fill="#6fa8dc"/><rect x="6.0" y="6.0" width="1" height="1" fill="#6fa8dc"/><rect x="6.0" y="7.8" width="1" height="1" fill="#6fa8dc"/><rect x="6.0" y="9.6" width="1" height="1" fill="#6fa8dc"/><rect x="6.0" y="11.4" width="1" height="1" fill="#6fa8dc"/><rect x="6.0" y="13.2" width="1" height="1" fill="#6fa8dc"/><rect x="6.0" y="15.0" width="1" height="1" fill="#6fa8dc"/><rect x="7.8" y="4.2" width="1" height="1" fill="#6fa8dc"/><rect x="7.8" y="6.0" width="1" height="1" fill="#6fa8dc"/><rect x="7.8" y="7.8" width="1" height="1" fill="#6fa8dc"/><rect x="7.8" y="9.6" width="1" height="1" fill="#6fa8dc"/><rect x="7.8" y="11.4" width="1" height="1" fill="#6fa8dc"/><rect x="7.8" y="13.2" width="1" height="1" fill="#6fa8dc"/><rect x="7.8" y="15.0" width="1" height="1" fill="#6fa8dc"/><rect x="9.6" y="4.2" width="1" height="1" fill="#6fa8dc"/><rect x="9.6" y="6.0" width="1" height="1" fill="#6fa8dc"/><rect x="9.6" y="7.8" width="1" height="1" fill="#6fa8dc"/><rect x="9.6" y="9.6" width="1" height="1" fill="#6fa8dc"/><rect x="9.6" y="11.4" width="1" height="1" fill="#6fa8dc"/><rect x="9.6" y="13.2" width="1" height="1" fill="#6fa8dc"/><rect x="9.6" y="15.0" width="1" height="1" fill="#6fa8dc"/><rect x="11.4" y="4.2" width="1" height="1" fill="#6fa8dc"/><rect x="11.4" y="6.0" width="1" height="1" fill="#6fa8dc"/><rect x="11.4" y="7.8" width="1" height="1" fill="#6fa8dc"/><rect x="11.4" y="9.6" width="1" height="1" fill="#6fa8dc"/><rect x="11.4" y="11.4" width="1" height="1" fill="#6fa8dc"/><rect x="11.4" y="13.2" width="1" height="1" fill="#6fa8dc"/><rect x="11.4" y="15.0" width="1" height="1" fill="#6fa8dc"/><rect x="13.2" y="4.2" width="1" height="1" fill="#6fa8dc"/><rect x="13.2" y="6.0" width="1" height="1" fill="#6fa8dc"/><rect x="13.2" y="7.8" width="1" height="1" fill="#6fa8dc"/><rect x="13.2" y="9.6" width="1" height="1" fill="#6fa8dc"/><rect x="13.2" y="11.4" width="1" height="1" fill="#6fa8dc"/><rect x="13.2" y="13.2" width="1" height="1" fill="#6fa8dc"/><rect x="13.2" y="15.0" width="1" height="1" fill="#6fa8dc"/><rect x="15.0" y="4.2" width="1" height="1" fill="#6fa8dc"/><rect x="15.0" y="6.0" width="1" height="1" fill="#6fa8dc"/><rect x="15.0" y="7.8" width="1" height="1" fill="#6fa8dc"/><rect x="15.0" y="9.6" width="1" height="1" fill="#6fa8dc"/><rect x="15.0" y="11.4" width="1" height="1" fill="#6fa8dc"/><rect x="15.0" y="13.2" width="1" height="1" fill="#6fa8dc"/><rect x="15.0" y="15.0" width="1" height="1" fill="#6fa8dc"/></svg><svg class="abs" style="left:307px;top:38px" width="21" height="20"><path d="M4.5 1.5 H1.5 V4.5" fill="none" stroke="#dcdcdc" stroke-width="1.2"/><path d="M15.5 1.5 H18.5 V4.5" fill="none" stroke="#dcdcdc" stroke-width="1.2"/><path d="M4.5 18.5 H1.5 V15.5" fill="none" stroke="#dcdcdc" stroke-width="1.2"/><path d="M15.5 18.5 H18.5 V15.5" fill="none" stroke="#dcdcdc" stroke-width="1.2"/><rect x="4.5" y="8.5" width="4" height="6" fill="none" stroke="#9a9a9a" stroke-width="1"/><rect x="8.5" y="6" width="7" height="10" fill="none" stroke="#9a9a9a" stroke-width="1"/><circle cx="14" cy="6" r="3" fill="#3a3a3a" stroke="#9a9a9a" stroke-width="1"/><path d="M9.5 9 L13 11 L9.5 13 Z" fill="none" stroke="#9a9a9a" stroke-width="0.9"/></svg><div class="abs" style="left:361px;top:40px;width:6px;height:6px;background:#4c4c4c"></div><div class="abs" style="left:367px;top:43px;width:7px;height:7px;background:#5a5a5a"></div><div class="abs" style="left:364px;top:47px;width:6px;height:6px;background:#6a6a6a"></div><div class="abs" style="left:371px;top:50px;width:6px;height:6px;background:#525252"></div><div class="abs" style="left:396px;top:40px;width:12px;height:12px;background:#4c4c4c"></div><div class="abs" style="left:402px;top:46px;width:10px;height:10px;background:#6a6a6a"></div><div class="abs" style="left:431px;top:40px;width:10px;height:8px;background:#4c4c4c"></div><div class="abs" style="left:436px;top:45px;width:11px;height:11px;background:#6a6a6a"></div><div class="abs" style="left:466px;top:40px;width:10px;height:12px;background:#4c4c4c"></div><div class="abs" style="left:468px;top:43px;width:11px;height:10px;background:#6a6a6a"></div><svg class="abs" style="left:515px;top:36px" width="135" height="24">
<polygon points="13.6,3.9 6.7,20 13.6,20" fill="#6a6a6a"/><polygon points="13.6,3.9 22.5,20 13.6,20" fill="#545454"/>
<polygon points="43.1,10.8 57.9,3.9 57.9,10.8" fill="#6a6a6a"/><polygon points="43.1,10.8 57.9,20 57.9,10.8" fill="#545454"/>
<rect x="76.6" y="3.9" width="8.3" height="16.1" fill="#6a6a6a"/><rect x="85" y="11" width="7" height="9" fill="#545454"/>
<path d="M86.5 8.5 V6 H89.5 V9" fill="none" stroke="#8a8a8a" stroke-width="1"/><path d="M85 7.2 L86.5 5.2 L88 7.2Z" fill="#8a8a8a"/>
<rect x="111.9" y="3.9" width="7.5" height="16.1" fill="#6a6a6a"/><rect x="119.4" y="3.9" width="7.6" height="7.1" fill="#545454"/>
<path d="M124.5 13 V17 H120.5" fill="none" stroke="#8a8a8a" stroke-width="1"/><path d="M121.5 15.5 L119.5 17 L121.5 18.5Z" fill="#8a8a8a"/>
</svg><svg class="abs" style="left:676px;top:37px" width="26" height="22">
<rect x="5.7" y="3" width="1" height="17" fill="#4a4a4a"/>
<rect x="8" y="5.8" width="12" height="4.6" fill="#5e5e5e"/><rect x="8" y="12.7" width="7.3" height="4.3" fill="#5e5e5e"/>
</svg><svg class="abs" style="left:732px;top:38px" width="20" height="20"><rect x="2.7" y="2.5" width="4.3" height="4.3" fill="#5d6b62"/><rect x="2.7" y="7.6" width="4.3" height="4.3" fill="#6a7a70"/><rect x="2.7" y="12.7" width="4.3" height="4.3" fill="#5d6b62"/><rect x="7.8" y="2.5" width="4.3" height="4.3" fill="#5a7a66"/><rect x="7.8" y="7.6" width="4.3" height="4.3" fill="#ff3030"/><rect x="7.8" y="12.7" width="4.3" height="4.3" fill="#5a7a66"/><rect x="12.9" y="2.5" width="4.3" height="4.3" fill="#5d6b62"/><rect x="12.9" y="7.6" width="4.3" height="4.3" fill="#6a7a70"/><rect x="12.9" y="12.7" width="4.3" height="4.3" fill="#5d6b62"/><rect x="6" y="0.5" width="0.9" height="18" fill="#d8d8d8"/><rect x="0" y="12.5" width="19" height="0.9" fill="#d8d8d8"/></svg><svg class="abs" style="left:765px;top:40px" width="22" height="16">
<rect x="3" y="3.8" width="8.7" height="8" fill="#2a2a2a"/>
<line x1="5" y1="8" x2="16" y2="8" stroke="#8a8a8a" stroke-width="1"/><path d="M15.5 5.5 L18.5 8 L15.5 10.5Z" fill="#6a6a6a"/>
</svg><svg class="abs" style="left:800px;top:36px" width="24" height="24">
<path d="M5.5 14.5 L12.5 7.5 A4.6 4.6 0 0 1 19 14 L12 21" fill="none" stroke="#d32f3c" stroke-width="4.2"/>
<path d="M5.5 14.5 L7.5 16.5" stroke="#e8e8e8" stroke-width="4.2" fill="none"/>
<path d="M10 19 L12 21" stroke="#e8e8e8" stroke-width="4.2" fill="none"/>
</svg><svg class="abs" style="left:833px;top:43px" width="10" height="9"><path d="M0.8 1 H8.2 L4.5 7.5Z" fill="#e0e0e0"/></svg><svg class="abs" style="left:866px;top:36px" width="170" height="24">
<rect x="5.9" y="3.9" width="11" height="11" fill="#6e6e6e"/>
<circle cx="17.4" cy="14.9" r="5" fill="#787878"/><path d="M15 14.9 H19.8 M17.4 12.5 V17.3" stroke="#111" stroke-width="1.2"/>
<rect x="40.7" y="4" width="11.3" height="11" fill="#6a6a6a"/>
<circle cx="52.6" cy="15" r="5" fill="#555"/><path d="M50 15 H55.2" stroke="#111" stroke-width="1.2"/>
<rect x="75.5" y="4" width="11" height="11" fill="#555"/>
<circle cx="87" cy="15" r="5" fill="#505050"/><path d="M82 15 H86.5 V10 A5 5 0 0 0 82 15Z" fill="#6e6e6e"/><path d="M82 15 A5 5 0 0 1 87 10" fill="none" stroke="#2a2a2a" stroke-width="1"/>
<rect x="110.5" y="4" width="11" height="11" fill="#6e6e6e"/>
<circle cx="122" cy="15" r="5" fill="#6e6e6e"/><path d="M117 15 H121.5 V10 A5 5 0 0 0 117 15Z" fill="#404040"/><path d="M117 15 A5 5 0 0 1 122 10" fill="none" stroke="#2a2a2a" stroke-width="1"/>
<rect x="145.5" y="4" width="11" height="11" fill="#6a6a6a"/>
<circle cx="157" cy="15" r="5" fill="#737373"/><path d="M152 15 A5 5 0 0 1 157 10 V15Z" fill="#666"/><path d="M152 15 A5 5 0 0 1 157 10 M157 10 V15 H152" fill="none" stroke="#2a2a2a" stroke-width="1"/>
</svg><svg class="abs" style="left:1051px;top:42px" width="12" height="12"><path d="M2 2.3 L5.6 6 L2 9.7 M6.2 2.3 L9.8 6 L6.2 9.7" fill="none" stroke="#f2f2f2" stroke-width="1.6"/></svg>
<div class="abs" style="left:22.5px;top:82.5px;font-size:10.2px;color:#e0e0e0">Zoo...</div><div class="abs" style="left:62px;top:78px;width:1px;height:19px;background:#262626"></div><div class="abs" style="left:68px;top:79px;width:72px;height:19px;background:#2e2e2e;border:1px solid #262626;border-radius:3px"></div><div class="abs" style="left:124px;top:80px;width:15px;height:17px;background:#404040;border-left:1px solid #262626"></div><svg class="abs" style="left:128.5px;top:85.5px" width="8" height="8"><path d="M0.5 0.5 H6.5 L3.5 5.8Z" fill="#d8d8d8"/></svg><div class="abs" style="left:71.5px;top:82.5px;font-size:10.5px;color:#e8e8e8">500 %</div><div class="abs" style="left:148px;top:79px;width:1px;height:17px;background:#262626"></div><div class="abs" style="left:311px;top:79px;width:1px;height:18px;background:#262626"></div><svg class="abs" style="left:150px;top:76px" width="160" height="22"><rect x="17.0" y="3" width="1" height="3.5" fill="#9a9a9a"/><rect x="22.0" y="3" width="1" height="3.5" fill="#9a9a9a"/><rect x="34.7" y="3" width="1" height="3.5" fill="#9a9a9a"/><rect x="57.5" y="3" width="1" height="3.5" fill="#9a9a9a"/><rect x="65.0" y="3" width="1" height="3.5" fill="#9a9a9a"/><rect x="80.2" y="3" width="1" height="3.5" fill="#9a9a9a"/><rect x="96.2" y="3" width="1" height="3.5" fill="#9a9a9a"/><rect x="117.3" y="3" width="1" height="3.5" fill="#9a9a9a"/><rect x="124.9" y="3" width="1" height="3.5" fill="#9a9a9a"/><rect x="131.7" y="3" width="1" height="3.5" fill="#9a9a9a"/><rect x="134.2" y="3" width="1" height="3.5" fill="#9a9a9a"/><rect x="130" y="14" width="24.5" height="3.5" fill="#262626" stroke="#3c3c3c" stroke-width="0.6"/><rect x="4.5" y="13.7" width="126" height="3.9" rx="1.9" fill="#b6d6f6"/><path d="M129.5 18 V14 L134.5 9.5 L139.5 14 V18Z" fill="#e8e8e8"/></svg><div class="abs" style="left:328px;top:82px;font-size:10.8px;color:#e0e0e0">Units:</div><div class="abs" style="left:364px;top:77px;width:80px;height:21px;background:#3f3f3f;border:1px solid #2a2a2a;border-radius:3px"></div><div class="abs" style="left:368px;top:82px;font-size:10.8px;color:#e8e8e8">Pixels</div><svg class="abs" style="left:432px;top:81px" width="9" height="13"><path d="M1.5 5 L4.5 1.5 L7.5 5Z M1.5 8 L4.5 11.5 L7.5 8Z" fill="#d0d0d0"/></svg>
<div class="abs" style="left:761px;top:103px;width:2px;height:666px;background:#333333;"></div><div class="abs" style="left:763px;top:103px;width:304px;height:233px;background:#404040;"></div><div class="abs" style="left:763px;top:103px;width:304px;height:21px;background:#313131;"></div><div class="abs" style="left:763px;top:124px;width:304px;height:1px;background:#262626;"></div><div class="abs" style="left:782px;top:103px;width:38px;height:22px;background:#404040;"></div><div class="abs" style="left:771.5px;top:109px;width:1.0px;height:10px;background:#4a4a4a;"></div><div class="abs" style="left:774.5px;top:109px;width:1.0px;height:10px;background:#4a4a4a;"></div><div class="abs" style="left:785.5px;top:108.69px;font-size:10.6px;line-height:10.6px;color:#f2f2f2;font-weight:400;white-space:nowrap;">Colour</div><div class="abs" style="left:827.5px;top:108.69px;font-size:10.6px;line-height:10.6px;color:#a3a3a3;font-weight:400;white-space:nowrap;">Par</div><div class="abs" style="left:854.5px;top:108.69px;font-size:10.6px;line-height:10.6px;color:#a3a3a3;font-weight:400;white-space:nowrap;">Swt</div><div class="abs" style="left:881.7px;top:108.69px;font-size:10.6px;line-height:10.6px;color:#a3a3a3;font-weight:400;white-space:nowrap;">Sy</div><div class="abs" style="left:909.8px;top:108.69px;font-size:10.6px;line-height:10.6px;color:#a3a3a3;font-weight:400;white-space:nowrap;">Con</div><div class="abs" style="left:940.2px;top:108.69px;font-size:10.6px;line-height:10.6px;color:#a3a3a3;font-weight:400;white-space:nowrap;">Brs</div><div class="abs" style="left:969.2px;top:108.69px;font-size:10.6px;line-height:10.6px;color:#a3a3a3;font-weight:400;white-space:nowrap;">Iso</div><div class="abs" style="left:997.4px;top:108.69px;font-size:10.6px;line-height:10.6px;color:#a3a3a3;font-weight:400;white-space:nowrap;">Apr</div><div class="abs" style="left:1023.9px;top:108.69px;font-size:10.6px;line-height:10.6px;color:#a3a3a3;font-weight:400;white-space:nowrap;">Chr</div><div class="abs" style="left:849.2px;top:107.8px;width:1.0px;height:12.0px;background:#4c4c4c;"></div><div class="abs" style="left:877px;top:107.8px;width:1px;height:12.0px;background:#4c4c4c;"></div><div class="abs" style="left:905.4px;top:107.8px;width:1.0px;height:12.0px;background:#4c4c4c;"></div><div class="abs" style="left:934.5px;top:107.8px;width:1.0px;height:12.0px;background:#4c4c4c;"></div><div class="abs" style="left:962px;top:107.8px;width:1px;height:12.0px;background:#4c4c4c;"></div><div class="abs" style="left:989.6px;top:107.8px;width:1.0px;height:12.0px;background:#4c4c4c;"></div><div class="abs" style="left:1019.3px;top:107.8px;width:1.0px;height:12.0px;background:#4c4c4c;"></div><svg class="abs" style="left:1050px;top:109px" width="16" height="12"><rect x="1" y="1" width="8" height="1.1" fill="#ececec"/><rect x="1" y="3" width="8" height="1.1" fill="#ececec"/><rect x="1" y="5" width="8" height="1.1" fill="#ececec"/><rect x="1" y="7" width="8" height="1.1" fill="#ececec"/><path d="M10 6.5 H14 L12 9.5Z" fill="#ececec"/></svg><div class="abs" style="left:763px;top:336px;width:304px;height:1px;background:#252525;"></div><svg class="abs" style="left:763px;top:125px" width="100" height="50">
<circle cx="21.7" cy="20" r="7.5" fill="#4a4a4a"/>
<circle cx="21.7" cy="20" r="9.8" fill="none" stroke="#000" stroke-width="5"/>
<circle cx="21.7" cy="20" r="12.4" fill="none" stroke="#505050" stroke-width="1.1"/>
<circle cx="21.7" cy="20" r="7.2" fill="none" stroke="#505050" stroke-width="1"/>
<circle cx="33" cy="31.5" r="12.2" fill="#ebebeb" stroke="#444" stroke-width="2"/>
<path d="M38.5 10.2 Q45 10.5 47 16.5" fill="none" stroke="#d8d8d8" stroke-width="1.1"/>
<path d="M37 10.2 L40 8 L40 12.5Z M47.6 18 L44.8 15.4 L49.2 15Z" fill="#d8d8d8"/>
<circle cx="13.4" cy="40.9" r="4.6" fill="#f4f4f4" stroke="#111" stroke-width="1.6"/>
<line x1="10.6" y1="43.7" x2="16.2" y2="38.1" stroke="#e03040" stroke-width="1.2"/>
<g transform="translate(66,16.5) rotate(45) scale(1.3)">
<path d="M-1.1 -1.5 H1.1 V6.5 L0 8.6 L-1.1 6.5Z" fill="#c8c8c8"/>
<rect x="-2.5" y="-3" width="5" height="1.6" fill="#a87010"/>
<path d="M-2 -3 V-5.5 Q-2 -8 0 -8 Q2 -8 2 -5.5 V-3Z" fill="#e0a840"/>
</g>
<circle cx="82.5" cy="16.5" r="6.8" fill="#000" stroke="#4e4e4e" stroke-width="1.6"/>
</svg><div class="abs" style="left:846px;top:146px;width:153px;height:153px;border-radius:50%;background:conic-gradient(from 90deg,#ff2020 0deg,#ff4400 10deg,#ff9900 26deg,#ffee00 58deg,#80ff00 79deg,#00ff00 116deg,#00ff80 150deg,#00f4ff 180deg,#0090ff 201deg,#1a3cff 232deg,#8a30ff 274deg,#f040ff 302deg,#ff40a0 327deg,#ff2050 346deg,#ff2020 360deg)"></div><div class="abs" style="left:861.3px;top:161.3px;width:122.4px;height:122.4px;border-radius:50%;background:#404040"></div><svg class="abs" style="left:846px;top:146px" width="153" height="153">
<defs>
<linearGradient id="tv" x1="0" y1="0" x2="0" y2="1"><stop offset="0" stop-color="#000"/><stop offset="1" stop-color="#fff"/></linearGradient>
<linearGradient id="th" x1="0" y1="0" x2="1" y2="0"><stop offset="0" stop-color="#ff0000" stop-opacity="0"/><stop offset="1" stop-color="#ff0000" stop-opacity="1"/></linearGradient>
</defs>
<polygon points="46.2,23.4 46.2,129.7 138.8,76.5" fill="url(#tv)"/>
<polygon points="46.2,23.4 46.2,129.7 138.8,76.5" fill="url(#th)"/>
<circle cx="146.3" cy="76.5" r="4.6" fill="none" stroke="#fff" stroke-width="1.3"/>
<circle cx="45.2" cy="121.6" r="4.8" fill="#ebebeb" stroke="#555" stroke-width="0.8"/>
</svg><div class="abs" style="left:772px;top:253.58px;font-size:10px;line-height:10px;color:#c8c8c8;font-weight:400;white-space:nowrap;">H: 0</div><div class="abs" style="left:773px;top:266.78px;font-size:10px;line-height:10px;color:#c8c8c8;font-weight:400;white-space:nowrap;">S: 0</div><div class="abs" style="left:773.4px;top:279.58px;font-size:10px;line-height:10px;color:#c8c8c8;font-weight:400;white-space:nowrap;">L: 92</div><div class="abs" style="left:771.4px;top:296.78px;font-size:10px;line-height:10px;color:#c0c0c0;font-weight:400;white-space:nowrap;">Opacity</div><svg class="abs" style="left:770px;top:308px" width="230" height="22">
<defs><pattern id="chk" x="22" y="6.5" width="8" height="8" patternUnits="userSpaceOnUse"><rect width="8" height="8" fill="#9a9a9a"/><rect width="4" height="4" fill="#fff"/><rect x="4" y="4" width="4" height="4" fill="#fff"/></pattern>
<linearGradient id="og" x1="0" y1="0" x2="1" y2="0"><stop offset="0" stop-color="#fff" stop-opacity="0.25"/><stop offset="1" stop-color="#000" stop-opacity="0.72"/></linearGradient></defs>
<circle cx="8.3" cy="10.7" r="6" fill="#ebebeb" stroke="#333" stroke-width="0.8"/>
<rect x="22" y="6.5" width="198.6" height="8" rx="4" fill="url(#chk)"/>
<rect x="22" y="6.5" width="198.6" height="8" rx="4" fill="url(#og)"/>
<path d="M26 15 H216" stroke="#9a9a9a" stroke-width="0.8"/>
<circle cx="215.7" cy="10.6" r="4.7" fill="#222" stroke="#f0f0f0" stroke-width="1.3"/>
</svg><div class="abs" style="left:1001px;top:309px;width:61px;height:20px;background:#2f2f2f;border:1px solid #262626;border-radius:3px"></div><div class="abs" style="left:1045px;top:310px;width:16px;height:18px;background:#3a3a3a;border-left:1px solid #262626"></div><div class="abs" style="left:1005px;top:313.69px;font-size:10.6px;line-height:10.6px;color:#e8e8e8;font-weight:400;white-space:nowrap;">100 %</div><svg class="abs" style="left:1049px;top:315px" width="9" height="8"><path d="M0.5 1 H8.5 L4.5 7.5Z" fill="#d8d8d8"/></svg><div class="abs" style="left:763px;top:337px;width:304px;height:308px;background:#404040;"></div><div class="abs" style="left:763px;top:337px;width:304px;height:21px;background:#313131;"></div><div class="abs" style="left:763px;top:358px;width:304px;height:1px;background:#262626;"></div><div class="abs" style="left:782px;top:337px;width:38px;height:22px;background:#404040;"></div><div class="abs" style="left:771.5px;top:343px;width:1.0px;height:10px;background:#4a4a4a;"></div><div class="abs" style="left:774.5px;top:343px;width:1.0px;height:10px;background:#4a4a4a;"></div><div class="abs" style="left:785.5px;top:342.69px;font-size:10.6px;line-height:10.6px;color:#f2f2f2;font-weight:400;white-space:nowrap;">Layers</div><div class="abs" style="left:825.2px;top:342.69px;font-size:10.6px;line-height:10.6px;color:#a3a3a3;font-weight:400;white-space:nowrap;">Stroke</div><div class="abs" style="left:865.7px;top:342.69px;font-size:10.6px;line-height:10.6px;color:#a3a3a3;font-weight:400;white-space:nowrap;">Effects</div><div class="abs" style="left:907px;top:342.69px;font-size:10.6px;line-height:10.6px;color:#a3a3a3;font-weight:400;white-space:nowrap;">Styles</div><div class="abs" style="left:945.7px;top:342.69px;font-size:10.6px;line-height:10.6px;color:#a3a3a3;font-weight:400;white-space:nowrap;">Text Styles</div><div class="abs" style="left:1006.4px;top:342.69px;font-size:10.6px;line-height:10.6px;color:#a3a3a3;font-weight:400;white-space:nowrap;">Stock</div><div class="abs" style="left:860.7px;top:341.8px;width:1.0px;height:12.0px;background:#4c4c4c;"></div><div class="abs" style="left:903.2px;top:341.8px;width:1.0px;height:12.0px;background:#4c4c4c;"></div><div class="abs" style="left:941px;top:341.8px;width:1px;height:12.0px;background:#4c4c4c;"></div><div class="abs" style="left:1002.5px;top:341.8px;width:1.0px;height:12.0px;background:#4c4c4c;"></div><svg class="abs" style="left:1050px;top:343px" width="16" height="12"><rect x="1" y="1" width="8" height="1.1" fill="#ececec"/><rect x="1" y="3" width="8" height="1.1" fill="#ececec"/><rect x="1" y="5" width="8" height="1.1" fill="#ececec"/><rect x="1" y="7" width="8" height="1.1" fill="#ececec"/><path d="M10 6.5 H14 L12 9.5Z" fill="#ececec"/></svg><div class="abs" style="left:763px;top:359px;width:304px;height:29px;background:#404040;"></div><div class="abs" style="left:763px;top:388px;width:304px;height:1px;background:#2a2a2a;"></div><div class="abs" style="left:768.2px;top:368.59px;font-size:10.8px;line-height:10.8px;color:#cfcfcf;font-weight:400;white-space:nowrap;">Opacity:</div><div class="abs" style="left:824px;top:364.5px;width:48px;height:20.0px;background:#333333;border:1px solid #2a2a2a;border-radius:3px"></div><div class="abs" style="left:827px;top:369.89px;font-size:10.6px;line-height:10.6px;color:#6a6a6a;font-weight:400;white-space:nowrap;">100 %</div><svg class="abs" style="left:861px;top:371px" width="8" height="7"><path d="M0.5 0.5 H7.5 L4 6Z" fill="#7a7a7a"/></svg><div class="abs" style="left:875px;top:364.5px;width:147px;height:20.0px;background:#393939;border:1px solid #2a2a2a;border-radius:3px"></div><div class="abs" style="left:879.5px;top:369.79px;font-size:10.8px;line-height:10.8px;color:#6a6a6a;font-weight:400;white-space:nowrap;">Normal</div><svg class="abs" style="left:1011px;top:368px" width="8" height="13"><path d="M1.2 5 L4 2 L6.8 5Z M1.2 8 L4 11 L6.8 8Z" fill="#6a6a6a"/></svg><svg class="abs" style="left:1025px;top:367px" width="16" height="16" viewBox="-8 -8 16 16">
<g fill="#d8d8d8"><rect x="-1.6" y="-7" width="3.2" height="3.2" transform="rotate(0)"/><rect x="-1.6" y="-7" width="3.2" height="3.2" transform="rotate(45)"/><rect x="-1.6" y="-7" width="3.2" height="3.2" transform="rotate(90)"/><rect x="-1.6" y="-7" width="3.2" height="3.2" transform="rotate(135)"/><rect x="-1.6" y="-7" width="3.2" height="3.2" transform="rotate(180)"/><rect x="-1.6" y="-7" width="3.2" height="3.2" transform="rotate(225)"/><rect x="-1.6" y="-7" width="3.2" height="3.2" transform="rotate(270)"/><rect x="-1.6" y="-7" width="3.2" height="3.2" transform="rotate(315)"/>
<circle r="5"/></g><circle r="2" fill="#3a3a3a"/></svg><svg class="abs" style="left:1046px;top:366px" width="14" height="16">
<path d="M3.5 7 V4.8 A3 3 0 0 1 9.5 4.8 V7" fill="none" stroke="#b8b8b8" stroke-width="1.6"/>
<rect x="1.8" y="7" width="9.5" height="8" rx="1" fill="#b8b8b8"/></svg><div class="abs" style="left:763px;top:389px;width:290px;height:230px;background:#383838;"></div><div class="abs" style="left:1053px;top:389px;width:14px;height:230px;background:#3b3b3b;"></div><div class="abs" style="left:763px;top:421px;width:290px;height:1px;background:#292929;"></div><div class="abs" style="left:784px;top:390px;width:30px;height:30px;background:#2c2c2c;border:1px solid #111"></div><div class="abs" style="left:785px;top:391px;width:28px;height:28px;border-radius:50%;background:#ff2a0a"></div><div class="abs" style="left:819.7px;top:400.18px;font-size:10px;line-height:10px;color:#b0b0b0;font-weight:400;white-space:nowrap;">(Ellipse)</div><div class="abs" style="left:1031.5px;top:398px;width:14.0px;height:14px;background:#474747;border:1px solid #2a2a2a;border-radius:2px"></div><svg class="abs" style="left:1032px;top:398px" width="14" height="13"><path d="M3.8 7.5 L6 10.5 L10.3 3" fill="none" stroke="#ececec" stroke-width="1.4"/></svg><div class="abs" style="left:763px;top:454px;width:290px;height:1px;background:#292929;"></div><div class="abs" style="left:784px;top:423px;width:30px;height:30px;background:#2c2c2c;border:1px solid #111"></div><div class="abs" style="left:785px;top:424px;width:28px;height:28px;border-radius:50%;background:#ff2a0a"></div><div class="abs" style="left:819.7px;top:433.18px;font-size:10px;line-height:10px;color:#b0b0b0;font-weight:400;white-space:nowrap;">(Ellipse)</div><div class="abs" style="left:1031.5px;top:431px;width:14.0px;height:14px;background:#474747;border:1px solid #2a2a2a;border-radius:2px"></div><svg class="abs" style="left:1032px;top:431px" width="14" height="13"><path d="M3.8 7.5 L6 10.5 L10.3 3" fill="none" stroke="#ececec" stroke-width="1.4"/></svg><div class="abs" style="left:763px;top:487px;width:290px;height:1px;background:#292929;"></div><div class="abs" style="left:784px;top:456px;width:30px;height:30px;background:#2c2c2c;border:1px solid #111"></div><div class="abs" style="left:785px;top:457px;width:28px;height:28px;border-radius:50%;background:#ff2a0a"></div><div class="abs" style="left:819.7px;top:466.18px;font-size:10px;line-height:10px;color:#b0b0b0;font-weight:400;white-space:nowrap;">(Ellipse)</div><div class="abs" style="left:1031.5px;top:464px;width:14.0px;height:14px;background:#474747;border:1px solid #2a2a2a;border-radius:2px"></div><svg class="abs" style="left:1032px;top:464px" width="14" height="13"><path d="M3.8 7.5 L6 10.5 L10.3 3" fill="none" stroke="#ececec" stroke-width="1.4"/></svg><div class="abs" style="left:763px;top:520px;width:290px;height:1px;background:#292929;"></div><div class="abs" style="left:784px;top:489px;width:30px;height:30px;background:#2c2c2c;border:1px solid #111"></div><div class="abs" style="left:783px;top:490px;width:32px;height:30px;font-family:'Liberation Serif',serif;font-size:40px;line-height:30px;text-align:center;color:#d4d4d4">A</div><div class="abs" style="left:819.7px;top:499.18px;font-size:10px;line-height:10px;color:#b0b0b0;font-weight:400;white-space:nowrap;">(A)</div><div class="abs" style="left:1031.5px;top:497px;width:14.0px;height:14px;background:#474747;border:1px solid #2a2a2a;border-radius:2px"></div><svg class="abs" style="left:1032px;top:497px" width="14" height="13"><path d="M3.8 7.5 L6 10.5 L10.3 3" fill="none" stroke="#ececec" stroke-width="1.4"/></svg><div class="abs" style="left:763px;top:553px;width:290px;height:1px;background:#292929;"></div><div class="abs" style="left:784px;top:522px;width:30px;height:30px;background:#2c2c2c;border:1px solid #111"></div><div class="abs" style="left:783px;top:523px;width:32px;height:30px;font-family:'Liberation Serif',serif;font-size:40px;line-height:30px;text-align:center;color:#d4d4d4">A</div><div class="abs" style="left:819.7px;top:532.18px;font-size:10px;line-height:10px;color:#b0b0b0;font-weight:400;white-space:nowrap;">(A)</div><div class="abs" style="left:1031.5px;top:530px;width:14.0px;height:14px;background:#474747;border:1px solid #2a2a2a;border-radius:2px"></div><svg class="abs" style="left:1032px;top:530px" width="14" height="13"><path d="M3.8 7.5 L6 10.5 L10.3 3" fill="none" stroke="#ececec" stroke-width="1.4"/></svg><div class="abs" style="left:763px;top:586px;width:290px;height:1px;background:#292929;"></div><div class="abs" style="left:784px;top:555px;width:30px;height:30px;background:#2c2c2c;border:1px solid #111"></div><div class="abs" style="left:783px;top:556px;width:32px;height:30px;font-family:'Liberation Serif',serif;font-size:40px;line-height:30px;text-align:center;color:#d4d4d4">A</div><div class="abs" style="left:819.7px;top:565.18px;font-size:10px;line-height:10px;color:#b0b0b0;font-weight:400;white-space:nowrap;">(A)</div><div class="abs" style="left:1031.5px;top:563px;width:14.0px;height:14px;background:#474747;border:1px solid #2a2a2a;border-radius:2px"></div><svg class="abs" style="left:1032px;top:563px" width="14" height="13"><path d="M3.8 7.5 L6 10.5 L10.3 3" fill="none" stroke="#ececec" stroke-width="1.4"/></svg><div class="abs" style="left:763px;top:619px;width:290px;height:1px;background:#292929;"></div><div class="abs" style="left:784px;top:588px;width:30px;height:30px;background:#2c2c2c;border:1px solid #111"></div><div class="abs" style="left:786px;top:603px;width:26px;height:1px;background:#3a3a3a;"></div><div class="abs" style="left:799px;top:590px;width:1px;height:26px;background:#3a3a3a;"></div><div class="abs" style="left:819.7px;top:598.18px;font-size:10px;line-height:10px;color:#b0b0b0;font-weight:400;white-space:nowrap;">(Curves)</div><div class="abs" style="left:1031.5px;top:596px;width:14.0px;height:14px;background:#474747;border:1px solid #2a2a2a;border-radius:2px"></div><svg class="abs" style="left:1032px;top:596px" width="14" height="13"><path d="M3.8 7.5 L6 10.5 L10.3 3" fill="none" stroke="#ececec" stroke-width="1.4"/></svg><div class="abs" style="left:763px;top:619px;width:304px;height:26px;background:#414141;"></div><div class="abs" style="left:763px;top:619px;width:304px;height:3px;background:#2a2a2a;"></div><div class="abs" style="left:768px;top:623.6px;width:21px;height:20.0px;background:#2e2e2e;border-radius:3px"></div><svg class="abs" style="left:770px;top:625px" width="18" height="18">
<path d="M2 5 L9 8 L16 5 M2 8.5 L9 11.5 L16 8.5 M2 12 L9 15 L16 12" fill="none" stroke="#cfcfcf" stroke-width="1.5"/>
<path d="M2 5 L9 2 L16 5" fill="none" stroke="#cfcfcf" stroke-width="1"/></svg><svg class="abs" style="left:884px;top:626px" width="180" height="16">
<rect x="1.9" y="2.5" width="14" height="11" fill="#cfcfcf"/><circle cx="8.9" cy="8" r="3.6" fill="#2a2a2a"/>
<circle cx="31.7" cy="8" r="5.6" fill="#bfbfbf"/><path d="M31.7 2.4 A5.6 5.6 0 0 0 31.7 13.6Z" fill="#7a7a7a"/><path d="M28 12 L35.5 4" stroke="#3a3a3a" stroke-width="0.6"/>
<text x="45.5" y="12" font-family="Liberation Serif" font-style="italic" font-size="13" fill="#cfcfcf">fx</text>
<path d="M119 1.5 H125 L128.5 5 V14.5 H119Z M125 1.5 V5 H128.5" fill="none" stroke="#cfcfcf" stroke-width="1"/>
<rect x="141.8" y="2.3" width="10.4" height="12" fill="#cfcfcf"/><rect x="142.8" y="5.3" width="2.1" height="2" fill="#333"/><rect x="142.8" y="9.3" width="2.1" height="2" fill="#333"/><rect x="144.9" y="3.3" width="2.1" height="2" fill="#333"/><rect x="144.9" y="7.3" width="2.1" height="2" fill="#333"/><rect x="144.9" y="11.3" width="2.1" height="2" fill="#333"/><rect x="147.0" y="5.3" width="2.1" height="2" fill="#333"/><rect x="147.0" y="9.3" width="2.1" height="2" fill="#333"/><rect x="149.1" y="3.3" width="2.1" height="2" fill="#333"/><rect x="149.1" y="7.3" width="2.1" height="2" fill="#333"/><rect x="149.1" y="11.3" width="2.1" height="2" fill="#333"/>
<path d="M164 3.5 H175 M167.5 3.5 V2 H171.5 V3.5 M165.3 5 L166 14.5 H173 L173.7 5Z" fill="none" stroke="#cfcfcf" stroke-width="1"/>
<path d="M167.8 6.5 V12.5 M169.5 6.5 V12.5 M171.2 6.5 V12.5" stroke="#cfcfcf" stroke-width="0.8"/>
</svg><div class="abs" style="left:763px;top:645px;width:304px;height:1px;background:#252525;"></div><div class="abs" style="left:763px;top:646px;width:304px;height:123px;background:#404040;"></div><div class="abs" style="left:763px;top:647px;width:304px;height:21px;background:#313131;"></div><div class="abs" style="left:763px;top:668px;width:304px;height:1px;background:#262626;"></div><div class="abs" style="left:782px;top:647px;width:56px;height:22px;background:#404040;"></div><div class="abs" style="left:771.5px;top:653px;width:1.0px;height:10px;background:#4a4a4a;"></div><div class="abs" style="left:774.5px;top:653px;width:1.0px;height:10px;background:#4a4a4a;"></div><div class="abs" style="left:785.3px;top:652.69px;font-size:10.6px;line-height:10.6px;color:#f2f2f2;font-weight:400;white-space:nowrap;">Transform</div><div class="abs" style="left:843.5px;top:652.69px;font-size:10.6px;line-height:10.6px;color:#a3a3a3;font-weight:400;white-space:nowrap;">History</div><div class="abs" style="left:886.6px;top:652.69px;font-size:10.6px;line-height:10.6px;color:#a3a3a3;font-weight:400;white-space:nowrap;">Navigator</div><div class="abs" style="left:882.3px;top:651.8px;width:1.0px;height:12.0px;background:#4c4c4c;"></div><svg class="abs" style="left:778px;top:687px" width="42" height="42"><rect x="3.5" y="3.5" width="35" height="35" fill="#666"/><rect x="1.0" y="1.0" width="5" height="5" fill="#707070"/><rect x="1.0" y="18.5" width="5" height="5" fill="#707070"/><rect x="1.0" y="36.0" width="5" height="5" fill="#707070"/><rect x="18.5" y="1.0" width="5" height="5" fill="#707070"/><rect x="18.5" y="36.0" width="5" height="5" fill="#707070"/><rect x="36.0" y="1.0" width="5" height="5" fill="#707070"/><rect x="36.0" y="18.5" width="5" height="5" fill="#707070"/><rect x="36.0" y="36.0" width="5" height="5" fill="#707070"/></svg><div class="abs" style="left:836.9px;top:684.69px;font-size:10.8px;line-height:10.8px;color:#d0d0d0;font-weight:400;white-space:nowrap;">X:</div><div class="abs" style="left:850.6px;top:680.4px;width:59.0px;height:18.0px;background:#353535;border:1px solid #2a2a2a;border-radius:3px"></div><div class="abs" style="left:854.6px;top:684.79px;font-size:10.6px;line-height:10.6px;color:#6e6e6e;font-weight:400;white-space:nowrap;">0 px</div><div class="abs" style="left:836.9px;top:706.39px;font-size:10.8px;line-height:10.8px;color:#d0d0d0;font-weight:400;white-space:nowrap;">Y:</div><div class="abs" style="left:850.6px;top:702.1px;width:59.0px;height:18.0px;background:#353535;border:1px solid #2a2a2a;border-radius:3px"></div><div class="abs" style="left:854.6px;top:706.49px;font-size:10.6px;line-height:10.6px;color:#6e6e6e;font-weight:400;white-space:nowrap;">0 px</div><div class="abs" style="left:918.6px;top:684.69px;font-size:10.8px;line-height:10.8px;color:#d0d0d0;font-weight:400;white-space:nowrap;">W:</div><div class="abs" style="left:934.3px;top:680.4px;width:59.0px;height:18.0px;background:#353535;border:1px solid #2a2a2a;border-radius:3px"></div><div class="abs" style="left:938.3px;top:684.79px;font-size:10.6px;line-height:10.6px;color:#6e6e6e;font-weight:400;white-space:nowrap;">0 px</div><div class="abs" style="left:920px;top:706.39px;font-size:10.8px;line-height:10.8px;color:#d0d0d0;font-weight:400;white-space:nowrap;">H:</div><div class="abs" style="left:934.3px;top:702.1px;width:59.0px;height:18.0px;background:#353535;border:1px solid #2a2a2a;border-radius:3px"></div><div class="abs" style="left:938.3px;top:706.49px;font-size:10.6px;line-height:10.6px;color:#6e6e6e;font-weight:400;white-space:nowrap;">0 px</div><div class="abs" style="left:836.5px;top:737.79px;font-size:10.8px;line-height:10.8px;color:#d0d0d0;font-weight:400;white-space:nowrap;">R:</div><div class="abs" style="left:850.6px;top:733.5px;width:59.0px;height:18.0px;background:#353535;border:1px solid #2a2a2a;border-radius:3px"></div><div class="abs" style="left:854.6px;top:737.89px;font-size:10.6px;line-height:10.6px;color:#6e6e6e;font-weight:400;white-space:nowrap;">0 °</div><svg class="abs" style="left:899.6px;top:740px" width="8" height="7"><path d="M0.5 0.5 H7.5 L4 6Z" fill="#8a8a8a"/></svg><div class="abs" style="left:921px;top:737.79px;font-size:10.8px;line-height:10.8px;color:#d0d0d0;font-weight:400;white-space:nowrap;">S:</div><div class="abs" style="left:934.3px;top:733.5px;width:59.0px;height:18.0px;background:#353535;border:1px solid #2a2a2a;border-radius:3px"></div><div class="abs" style="left:938.3px;top:737.89px;font-size:10.6px;line-height:10.6px;color:#6e6e6e;font-weight:400;white-space:nowrap;">0 °</div><svg class="abs" style="left:983.3px;top:740px" width="8" height="7"><path d="M0.5 0.5 H7.5 L4 6Z" fill="#8a8a8a"/></svg><svg class="abs" style="left:1002px;top:689px" width="10" height="22">
<rect x="2.5" y="1.5" width="4" height="7" rx="2" fill="none" stroke="#a8a8a8" stroke-width="1.2"/>
<rect x="2.5" y="12.5" width="4" height="7" rx="2" fill="none" stroke="#a8a8a8" stroke-width="1.2"/>
<line x1="4.5" y1="6" x2="4.5" y2="15" stroke="#a8a8a8" stroke-width="1.2"/></svg>
</body></html>
